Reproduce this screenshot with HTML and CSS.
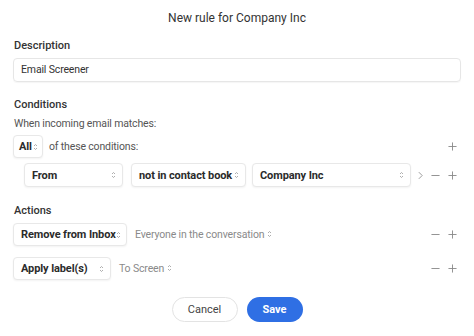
FILE: index.html
```html
<!DOCTYPE html>
<html lang="en">
<head>
    <meta charset="UTF-8">
    <meta name="viewport" content="width=device-width, initial-scale=1.0">
    <title>New rule</title>
    <link rel="stylesheet" href="styles.css">
</head>
<body>
    <div class="dialog">
        <h1 class="title">New rule for Company Inc</h1>

        <div class="label label-first">Description</div>
        <div class="text-input">Email Screener</div>

        <div class="label label-section">Conditions</div>
        <div class="hint">When incoming email matches:</div>

        <div class="row row-all">
            <div class="select select-all"><span>All</span><svg class="updown" viewBox="0 0 5 8"><path d="M1 3 L2.5 1.5 L4 3 M1 5 L2.5 6.5 L4 5"/></svg></div>
            <span class="plain">of these conditions:</span>
            <div class="tools">
                <svg class="icon" viewBox="0 0 10 10"><path d="M5 0.5 V9.5 M0.5 5 H9.5"/></svg>
            </div>
        </div>

        <div class="row row-condition">
            <div class="select w-from"><span>From</span><svg class="updown" viewBox="0 0 5 8"><path d="M1 3 L2.5 1.5 L4 3 M1 5 L2.5 6.5 L4 5"/></svg></div>
            <div class="select w-contact"><span>not in contact book</span><svg class="updown" viewBox="0 0 5 8"><path d="M1 3 L2.5 1.5 L4 3 M1 5 L2.5 6.5 L4 5"/></svg></div>
            <div class="select w-company"><span>Company Inc</span><svg class="updown" viewBox="0 0 5 8"><path d="M1 3 L2.5 1.5 L4 3 M1 5 L2.5 6.5 L4 5"/></svg></div>
            <div class="tools">
                <svg class="icon chevron" viewBox="0 0 6 10"><path d="M1 1 L5 5 L1 9"/></svg>
                <svg class="icon" viewBox="0 0 10 10"><path d="M0.5 5 H9.5"/></svg>
                <svg class="icon" viewBox="0 0 10 10"><path d="M5 0.5 V9.5 M0.5 5 H9.5"/></svg>
            </div>
        </div>

        <div class="label label-actions">Actions</div>

        <div class="row row-action">
            <div class="select w-remove"><span>Remove from Inbox</span><svg class="updown" viewBox="0 0 5 8"><path d="M1 3 L2.5 1.5 L4 3 M1 5 L2.5 6.5 L4 5"/></svg></div>
            <span class="muted">Everyone in the conversation <svg class="updown" viewBox="0 0 5 8"><path d="M1 3 L2.5 1.5 L4 3 M1 5 L2.5 6.5 L4 5"/></svg></span>
            <div class="tools">
                <svg class="icon" viewBox="0 0 10 10"><path d="M0.5 5 H9.5"/></svg>
                <svg class="icon" viewBox="0 0 10 10"><path d="M5 0.5 V9.5 M0.5 5 H9.5"/></svg>
            </div>
        </div>

        <div class="row row-action row-second">
            <div class="select w-label"><span>Apply label(s)</span><svg class="updown" viewBox="0 0 5 8"><path d="M1 3 L2.5 1.5 L4 3 M1 5 L2.5 6.5 L4 5"/></svg></div>
            <span class="muted">To Screen <svg class="updown" viewBox="0 0 5 8"><path d="M1 3 L2.5 1.5 L4 3 M1 5 L2.5 6.5 L4 5"/></svg></span>
            <div class="tools">
                <svg class="icon" viewBox="0 0 10 10"><path d="M0.5 5 H9.5"/></svg>
                <svg class="icon" viewBox="0 0 10 10"><path d="M5 0.5 V9.5 M0.5 5 H9.5"/></svg>
            </div>
        </div>

        <div class="buttons">
            <button class="btn btn-cancel">Cancel</button>
            <button class="btn btn-save">Save</button>
        </div>
    </div>
</body>
</html>
```

FILE: styles.css
```css
body {
    margin: 0;
    background-color: white;
    font-family: Roboto, "Noto Sans", sans-serif;
    color: #2b2b2b;
}
.dialog {
    width: 474px;
    padding: 0 13px;
    box-sizing: border-box;
}
.title {
    margin: 10px 0 0;
    font-size: 12px;
    line-height: 16px;
    font-weight: 400;
    text-align: center;
    color: #333;
}
.label {
    font-size: 11px;
    line-height: 14px;
    font-weight: 500;
    color: #333;
    padding-left: 1px;
}
.label-first {
    margin-top: 13px;
}
.label-section {
    margin-top: 16px;
}
.label-actions {
    margin-top: 17px;
}
.text-input {
    margin-top: 5px;
    height: 24px;
    line-height: 22px;
    padding: 0 7px;
    border: 1px solid #e6e6e6;
    border-radius: 4px;
    box-sizing: border-box;
    font-size: 10.5px;
    letter-spacing: -0.15px;
    color: #333;
    box-shadow: 0 1px 1px rgba(0, 0, 0, 0.04);
}
.hint {
    margin-top: 5px;
    font-size: 10.5px;
    letter-spacing: -0.15px;
    line-height: 14px;
    color: #555;
    padding-left: 1px;
}
.row {
    display: flex;
    align-items: center;
    gap: 6px;
}
.row-all {
    margin-top: 4px;
    height: 23px;
}
.row-condition {
    margin-top: 5px;
    margin-left: 11px;
    height: 24px;
}
.row-action {
    margin-top: 5px;
    height: 23px;
    gap: 8px;
}
.row-second {
    margin-top: 11px;
}
.tools {
    display: flex;
    align-items: center;
    gap: 8px;
    margin-left: auto;
    padding-right: 4px;
}
.select {
    display: flex;
    align-items: center;
    justify-content: space-between;
    height: 100%;
    padding: 0 6px 0 7px;
    border: 1px solid #e8e8e8;
    border-radius: 4px;
    box-sizing: border-box;
    background-color: white;
    box-shadow: 0 1px 2px rgba(0, 0, 0, 0.05);
    font-size: 11px;
    letter-spacing: -0.1px;
    font-weight: 700;
    color: #2b2b2b;
    white-space: nowrap;
}
.select-all {
    width: 30px;
    padding: 0 4px 0 5px;
}
.w-from {
    width: 99px;
}
.w-contact {
    width: 115px;
    margin-left: 2px;
}
.w-company {
    width: 159px;
}
.w-remove {
    width: 114px;
}
.w-label {
    width: 98px;
}
.updown {
    width: 5px;
    height: 8px;
    fill: none;
    stroke: #999;
    stroke-width: 0.8;
    flex-shrink: 0;
}
.plain {
    font-size: 10.5px;
    letter-spacing: -0.15px;
    color: #555;
}
.muted {
    font-size: 10.5px;
    letter-spacing: -0.15px;
    color: #8a8a8a;
    white-space: nowrap;
}
.icon {
    width: 9px;
    height: 9px;
    fill: none;
    stroke: #888;
    stroke-width: 1;
    flex-shrink: 0;
}
.chevron {
    width: 5px;
}
.buttons {
    display: flex;
    justify-content: center;
    gap: 9px;
    margin-top: 17px;
}
.btn {
    height: 25px;
    border-radius: 13px;
    font-family: Roboto, "Noto Sans", sans-serif;
    font-size: 11px;
    cursor: pointer;
}
.btn-cancel {
    width: 66px;
    background-color: white;
    border: 1px solid #e3e3e3;
    color: #444;
}
.btn-save {
    width: 56px;
    background-color: #2f6fe4;
    border: none;
    color: white;
    font-weight: 700;
}
```
